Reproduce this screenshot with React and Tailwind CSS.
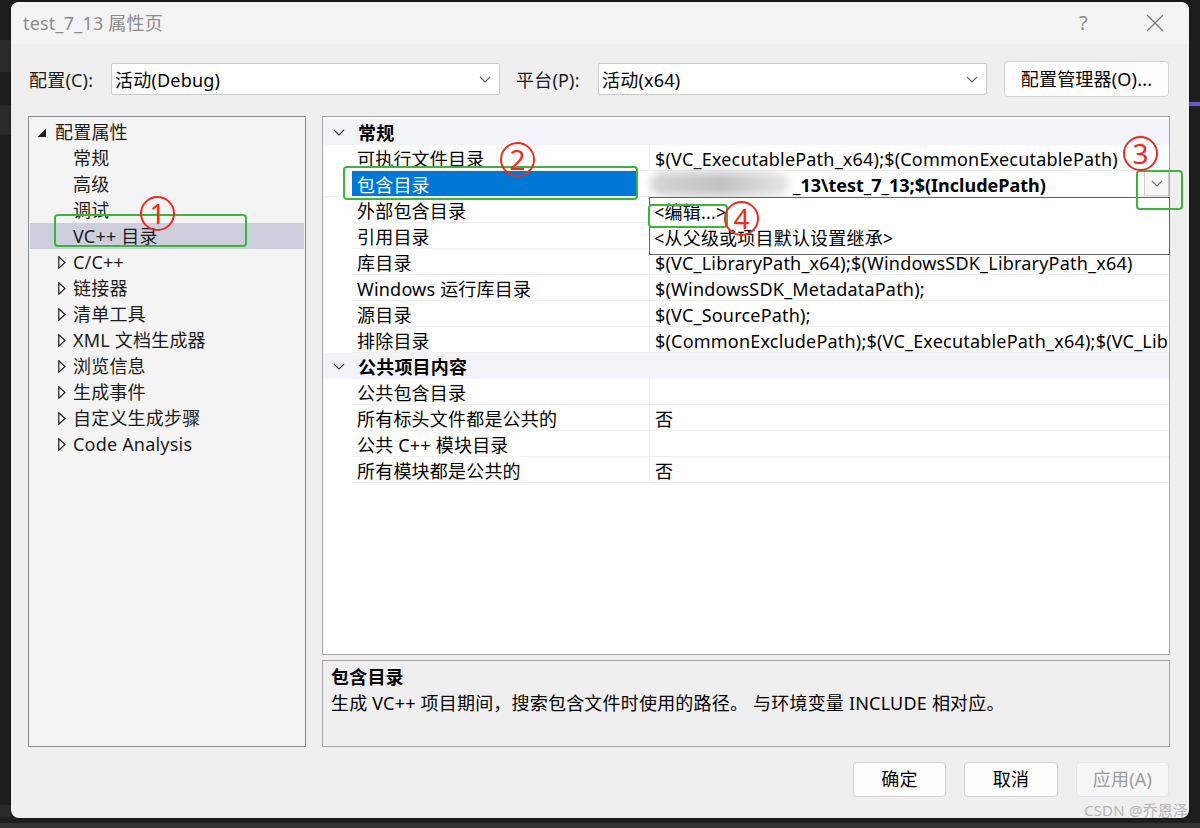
import React from "react";

const treeRows = [
  { label: "配置属性", kind: "root" },
  { label: "常规", kind: "leaf" },
  { label: "高级", kind: "leaf" },
  { label: "调试", kind: "leaf" },
  { label: "VC++ 目录", kind: "leaf", selected: true },
  { label: "C/C++", kind: "closed" },
  { label: "链接器", kind: "closed" },
  { label: "清单工具", kind: "closed" },
  { label: "XML 文档生成器", kind: "closed" },
  { label: "浏览信息", kind: "closed" },
  { label: "生成事件", kind: "closed" },
  { label: "自定义生成步骤", kind: "closed" },
  { label: "Code Analysis", kind: "closed" },
];

const gridRows = [
  { header: "常规" },
  { name: "可执行文件目录", value: "$(VC_ExecutablePath_x64);$(CommonExecutablePath)" },
  { name: "包含目录", selected: true },
  { name: "外部包含目录", value: "" },
  { name: "引用目录", value: "" },
  { name: "库目录", value: "$(VC_LibraryPath_x64);$(WindowsSDK_LibraryPath_x64)" },
  { name: "Windows 运行库目录", value: "$(WindowsSDK_MetadataPath);" },
  { name: "源目录", value: "$(VC_SourcePath);" },
  { name: "排除目录", value: "$(CommonExcludePath);$(VC_ExecutablePath_x64);$(VC_LibraryPath_x64)" },
  { header: "公共项目内容" },
  { name: "公共包含目录", value: "" },
  { name: "所有标头文件都是公共的", value: "否" },
  { name: "公共 C++ 模块目录", value: "" },
  { name: "所有模块都是公共的", value: "否" },
];

function Chevron({ className = "", color = "#5f5f5f" }) {
  return (
    <svg width="12" height="7" viewBox="0 0 12 7" className={className}>
      <polyline points="1,1 6,6 11,1" fill="none" stroke={color} strokeWidth="1.1" />
    </svg>
  );
}

function TreeRow({ row }) {
  return (
    <div
      className={`h-[26px] flex items-center whitespace-nowrap text-[18px] text-[#1b1b1b] mx-[1px] ${
        row.selected ? "bg-[#cdcfdc]" : ""
      }`}
    >
      {row.kind === "root" && (
        <>
          <div className="w-[7px]" />
          <svg width="10" height="10" viewBox="0 0 10 10" className="mt-[1px]">
            <polygon points="9,0.5 9,9 0.5,9" fill="#1e1e1e" />
          </svg>
          <div className="w-[8px]" />
        </>
      )}
      {row.kind === "closed" && (
        <>
          <div className="w-[28px]" />
          <svg width="8" height="13" viewBox="0 0 8 13" className="mt-[1px]">
            <polygon points="0.8,0.8 7,6.5 0.8,12.2" fill="none" stroke="#1e1e1e" strokeWidth="1.2" />
          </svg>
          <div className="w-[7px]" />
        </>
      )}
      {row.kind === "leaf" && <div className="w-[43px]" />}
      <span className="leading-[26px]">{row.label}</span>
    </div>
  );
}

function GridRow({ row }) {
  if (row.header) {
    return (
      <div className="h-[26px] flex items-center bg-[#f2f4f9] text-[18px]">
        <div className="w-[29px] flex justify-center pl-[2px]">
          <Chevron color="#333" />
        </div>
        <span className="pl-[6px] pt-[2px] font-bold text-black">{row.header}</span>
      </div>
    );
  }
  if (row.selected) {
    return (
      <div className="h-[26px] flex text-[18px] border-b border-[#f0f0f0]">
        <div className="w-[29px]" />
        <div className="w-[285px] bg-[#0078d7] text-white pl-[5px] pt-[2px] leading-[24px] whitespace-nowrap">
          {row.name}
        </div>
        <div className="w-[13px]" />
        <div className="flex-1 flex items-center relative whitespace-nowrap">
          <div className="w-[140px] h-[24px] rounded-[12px] bg-gradient-to-r from-[#d6d6d6] via-[#c2c2c2] to-[#e8e8e8] blur-[4px]" />
          <span className="ml-[3px] pt-[2px] font-bold text-black leading-[24px] tracking-normal">_13\test_7_13;$(IncludePath)</span>
          <div className="absolute right-[0px] top-[0px] w-[25px] h-[25px] bg-[#f6f6f6] border border-[#cfcfcf] flex items-center justify-center">
            <Chevron color="#707070" />
          </div>
        </div>
      </div>
    );
  }
  return (
    <div className="h-[26px] flex text-[18px]">
      <div className="w-[29px]" />
      <div className="w-[298px] pl-[5px] pt-[2px] leading-[24px] whitespace-nowrap border-b border-r border-[#f0f0f0] text-black">
        {row.name}
      </div>
      <div className="flex-1 pl-[5px] pt-[2px] leading-[24px] whitespace-nowrap overflow-hidden border-b border-[#f0f0f0] text-black">
        {row.value}
      </div>
    </div>
  );
}

function Annot({ x, y, n }) {
  return (
    <div
      className="absolute w-[35px] h-[35px] rounded-full border-2 border-[#ee2b22] flex items-center justify-center text-[#ee2b22] text-[28px] leading-none"
      style={{ left: x, top: y }}
    >
      <span className="-mt-[1px]">{n}</span>
    </div>
  );
}

function GreenBox({ x, y, w, h }) {
  return (
    <div
      className="absolute border-2 border-[#3db53d] rounded-[4px]"
      style={{ left: x, top: y, width: w, height: h }}
    />
  );
}

export default function App() {
  return (
    <div className="w-[1200px] h-[828px] bg-[#1e1e1e] relative overflow-hidden tracking-[0.2px] font-['Noto_Sans','Noto_Sans_CJK_SC',sans-serif]">
      {/* background scraps */}
      <div className="absolute left-0 top-[40px] w-[11px] h-[32px] bg-[#2b2b2b]" />
      <div className="absolute left-0 top-[105px] w-[11px] h-[30px] bg-[#2a2a2a]" />
      <div className="absolute left-0 top-[805px] w-[11px] h-[12px] bg-[#2b2b2b]" />
      <div className="absolute right-0 top-[102px] w-[11px] h-[4px] bg-[#6b5ad8]" />
      <div className="absolute left-0 bottom-0 w-[1200px] h-[5px] bg-[#333333]" />

      <div className="absolute left-[11px] top-[2px] w-[1178px] h-[816px] bg-[#efefef] rounded-[8px] flex flex-col overflow-hidden shadow-[0_0_3px_rgba(0,0,0,0.6)]">
        {/* title bar */}
        <div className="h-[42px] bg-[#f3f3f3] flex items-center pl-[12px] pr-[25px] shrink-0">
          <span className="text-[18px] text-[#8c8c8c]">test_7_13 属性页</span>
          <div className="flex-1" />
          <span className="text-[20px] text-[#8c8c8c] mr-[58px]">?</span>
          <svg width="18" height="18" viewBox="0 0 18 18">
            <line x1="1" y1="1" x2="17" y2="17" stroke="#7a7a7a" strokeWidth="1.3" />
            <line x1="17" y1="1" x2="1" y2="17" stroke="#7a7a7a" strokeWidth="1.3" />
          </svg>
        </div>

        {/* config row */}
        <div className="mt-[17px] h-[36px] flex items-center pl-[18px] shrink-0 text-[18px] text-[#1b1b1b]">
          <div className="w-[82px] pt-[2px]">配置(C):</div>
          <div className="w-[389px] h-[32px] bg-white border border-[#cbcbcb] rounded-[2px] flex items-center pl-[3px] pr-[8px]">
            <span className="flex-1 text-black pt-[2px]">活动(Debug)</span>
            <Chevron />
          </div>
          <div className="w-[82px] ml-[16px] pt-[2px]">平台(P):</div>
          <div className="w-[389px] h-[32px] bg-white border border-[#cbcbcb] rounded-[2px] flex items-center pl-[3px] pr-[8px]">
            <span className="flex-1 text-black pt-[2px]">活动(x64)</span>
            <Chevron />
          </div>
          <div className="ml-[17px] w-[165px] h-[36px] bg-[#fdfdfd] border border-[#d3d3d3] rounded-[4px] flex items-center justify-center text-black">
            配置管理器(O)...
          </div>
        </div>

        {/* main area */}
        <div className="mt-[19px] h-[631px] flex pl-[17px] gap-[16px] shrink-0">
          <div className="w-[278px] h-full bg-[#f4f4f4] border border-[#8a8d92] pt-[2px]">
            {treeRows.map((r, i) => (
              <TreeRow key={i} row={r} />
            ))}
          </div>
          <div className="w-[848px] flex flex-col gap-[5px]">
            <div className="h-[539px] bg-white border border-[#a5a5a5] pt-[2px] relative">
              {gridRows.map((r, i) => (
                <GridRow key={i} row={r} />
              ))}
              {/* dropdown list */}
              <div className="absolute left-[326px] top-[80px] w-[521px] h-[58px] bg-white border border-[#646464] text-[18px] text-black">
                <div className="h-[27px] pl-[4px] pt-[2px] leading-[25px]">&lt;编辑...&gt;</div>
                <div className="h-[26px] pl-[4px] pt-[1px] leading-[25px]">&lt;从父级或项目默认设置继承&gt;</div>
              </div>
            </div>
            <div className="h-[87px] bg-[#efefef] border border-[#a5a5a5] pl-[8px] pt-[3px] text-[18px] text-black">
              <div className="h-[26px] leading-[26px] font-bold">包含目录</div>
              <div className="h-[26px] leading-[26px]">生成 VC++ 项目期间，搜索包含文件时使用的路径。 与环境变量 INCLUDE 相对应。</div>
            </div>
          </div>
        </div>

        {/* bottom buttons */}
        <div className="mt-[15px] h-[35px] flex justify-end gap-[18px] pr-[20px] shrink-0 text-[18px]">
          <div className="w-[93px] h-[35px] bg-[#fdfdfd] border border-[#d3d3d3] rounded-[4px] flex items-center justify-center text-black">确定</div>
          <div className="w-[94px] h-[35px] bg-[#fdfdfd] border border-[#d3d3d3] rounded-[4px] flex items-center justify-center text-black">取消</div>
          <div className="w-[93px] h-[35px] bg-[#f6f6f6] border border-[#e6e6e6] rounded-[4px] flex items-center justify-center text-[#9d9d9d]">应用(A)</div>
        </div>
      </div>

      {/* annotations */}
      <GreenBox x={54} y={214} w={193} h={33} />
      <GreenBox x={343} y={166} w={295} h={34} />
      <GreenBox x={1136} y={170} w={47} h={40} />
      <GreenBox x={648} y={204} w={80} h={24} />
      <Annot x={140} y={196} n="1" />
      <Annot x={500} y={142} n="2" />
      <Annot x={1123} y={136} n="3" />
      <Annot x={724} y={201} n="4" />

      <div className="absolute left-[1084px] top-[799px] text-[15px] text-[#b4b4b4] whitespace-nowrap">CSDN @乔恩泽</div>
    </div>
  );
}
